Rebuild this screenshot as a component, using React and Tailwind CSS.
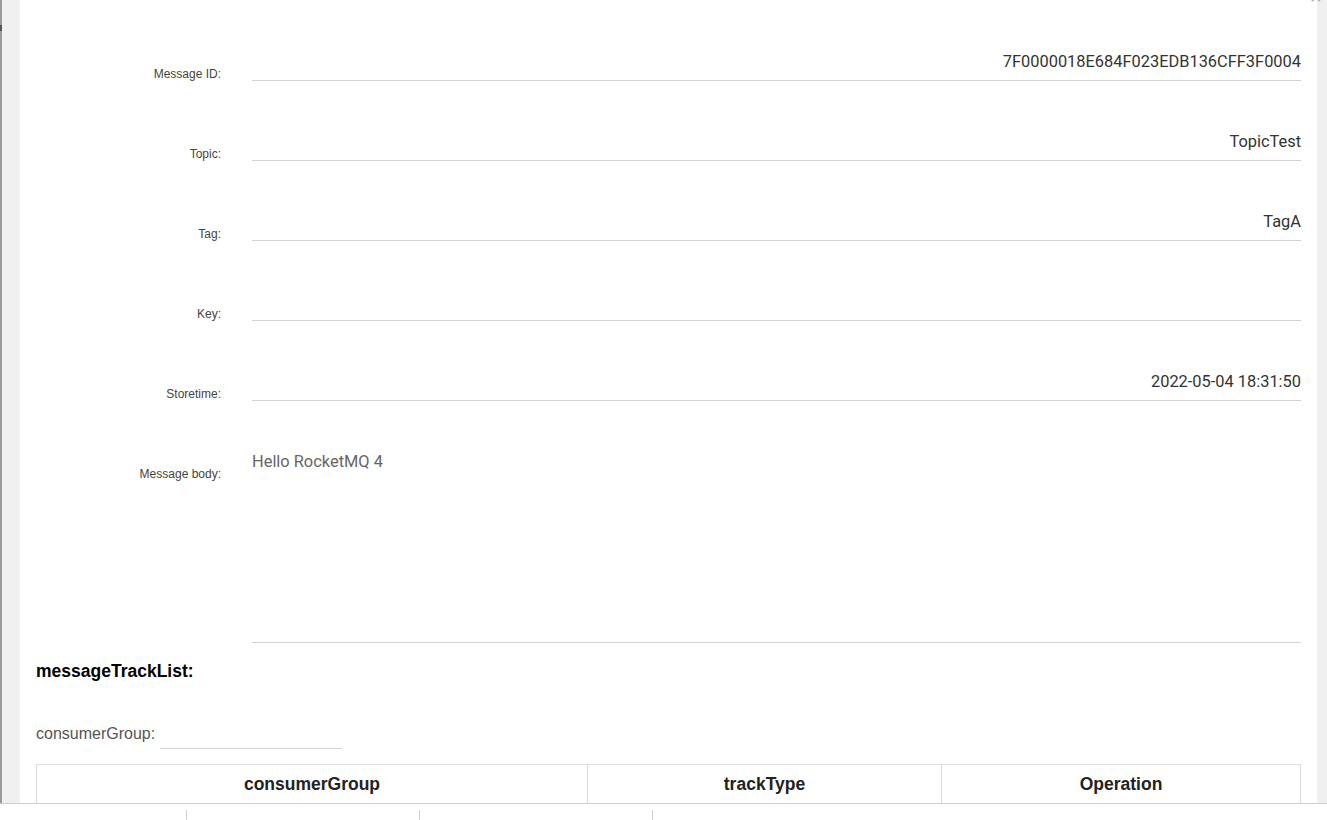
const fields = [
  { label: 'Message ID:', value: '7F0000018E684F023EDB136CFF3F0004' },
  { label: 'Topic:', value: 'TopicTest' },
  { label: 'Tag:', value: 'TagA' },
  { label: 'Key:', value: '' },
  { label: 'Storetime:', value: '2022-05-04 18:31:50' }
];

const labelFont = { fontFamily: '"Liberation Sans", Arial, sans-serif' };

function FieldRow({ label, value }) {
  return (
    <div className="flex h-[80px]">
      <div className="w-[185px] shrink-0 pt-[66px] text-right text-[12px] leading-[14px] text-[#444]">{label}</div>
      <div className="ml-[31px] flex-1 pt-[41px]">
        <div
          className="h-[39px] border-b border-[#d2d2d2] pt-[2px] text-right text-[16.4px] leading-[36px] text-[#333]"
          style={{ fontFamily: 'Roboto, sans-serif' }}
        >
          {value}
        </div>
      </div>
    </div>
  );
}

export default function App() {
  return (
    <div className="relative flex h-[820px] w-full flex-col overflow-hidden bg-white" style={labelFont}>
      <div className="flex h-[803px] shrink-0">
        {/* backdrop edge */}
        <div className="relative w-[2px] bg-[#9a9a9a]">
          <div className="absolute left-0 top-[25px] h-[6px] w-[2px] bg-[#555]" />
        </div>
        <div className="w-[18px] bg-[#f0f0f0]" />

        {/* modal */}
        <div className="flex-1 overflow-hidden bg-white px-[16px] pt-[1px]">
          {fields.map((f) => (
            <FieldRow key={f.label} label={f.label} value={f.value} />
          ))}

          <div className="flex">
            <div className="w-[185px] shrink-0 pt-[66px] text-right text-[12px] leading-[14px] text-[#444]">Message body:</div>
            <div className="ml-[31px] flex-1 pt-[41px]">
              <div
                className="h-[201px] border-b border-[#d2d2d2] pt-[2px] text-[16.4px] leading-[36px] text-[#666]"
                style={{ fontFamily: 'Roboto, sans-serif' }}
              >
                Hello RocketMQ 4
              </div>
            </div>
          </div>

          <div className="mt-[16px] text-[17.5px] font-bold leading-[24px] text-black">messageTrackList:</div>

          <div className="mt-[31px] flex items-end">
            <div className="pb-[4px] text-[16px] leading-[22px] text-[#555]">consumerGroup:</div>
            <div className="ml-[5px] h-[35px] w-[182px] border-b border-[#d2d2d2]" />
          </div>

          <div className="mt-[15px] grid grid-cols-[550px_354px_1fr] border border-[#dcdcdc] text-[17.5px] font-bold text-[#222]">
            <div className="h-[40px] pt-[8px] text-center leading-[22px]">consumerGroup</div>
            <div className="h-[40px] border-l border-[#dcdcdc] pt-[8px] text-center leading-[22px]">trackType</div>
            <div className="h-[40px] border-l border-[#dcdcdc] pt-[8px] text-center leading-[22px]">Operation</div>
          </div>
        </div>

        <div className="w-[10px] bg-[#f0f0f0]" />
      </div>

      {/* bottom bar */}
      <div className="flex h-[17px] border-t border-[#cfcfcf] pt-[6px]">
        <div className="w-[186px]" />
        <div className="w-[233px] border-l border-[#cfcfcf]" />
        <div className="w-[233px] border-l border-[#cfcfcf]" />
        <div className="flex-1 border-l border-[#cfcfcf]" />
      </div>

      <span className="absolute left-[1310px] top-[-13px] text-[20px] leading-[20px] text-[#aaa]">×</span>
    </div>
  );
}
